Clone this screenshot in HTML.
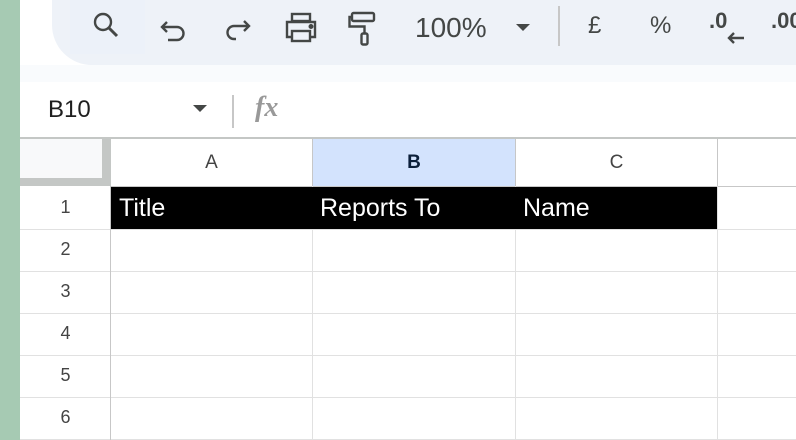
<!DOCTYPE html>
<html><head><style>
*{margin:0;padding:0;box-sizing:border-box}
body{width:796px;height:440px;overflow:hidden;background:#fff;font-family:"Liberation Sans",Arial,sans-serif;position:relative}
.a{position:absolute}
.ic{position:absolute;stroke:#444746;fill:none;stroke-width:2.4}
.rn{position:absolute;left:20px;width:91px;text-align:center;font-size:18px;color:#444;}
.hl{position:absolute;height:1px;background:#e1e1e1;left:20px;width:776px}
.vl{position:absolute;width:1px;background:#e1e1e1;top:186px;height:254px}
</style></head><body>
<div class="a" style="left:0;top:0;width:20px;height:440px;background:#a6cab3"></div>
<div class="a" style="left:20px;top:65px;width:776px;height:17px;background:#f9fbfd"></div>
<div class="a" style="left:52px;top:-20px;width:800px;height:85px;background:#eef2f8;border-radius:0 0 0 40px"></div>
<div class="a" style="left:70px;top:0;width:75px;height:54px;background:#ecf1f9"></div>
<!-- icons -->
<svg class="ic" style="left:88px;top:8px" width="36" height="36" viewBox="0 0 36 36"><circle cx="15" cy="14" r="8"/><path d="M21 20l8 8" stroke-width="3"/></svg>
<svg class="ic" style="left:158px;top:12px" width="34" height="34" viewBox="0 0 34 34"><path d="M9 10l-5 5 5 5"/><path d="M4 15h15a6.5 6.5 0 0 1 0 13h-9"/></svg>
<svg class="ic" style="left:220px;top:12px" width="34" height="34" viewBox="0 0 34 34"><path d="M24 9l5 5-5 5"/><path d="M29 14H14a6.5 6.5 0 0 0 0 13h2"/></svg>
<svg class="ic" style="left:282px;top:11px" width="40" height="34" viewBox="0 0 40 34"><rect x="10" y="3" width="18" height="7"/><path d="M10 26H5V11h28v15h-5"/><rect x="10" y="20" width="18" height="10"/><circle cx="29" cy="15.5" r="1.3" fill="#444746"/></svg>
<svg class="ic" style="left:347px;top:9px" width="32" height="38" viewBox="0 0 32 38"><rect x="5" y="4" width="22" height="8" rx="1.5"/><path d="M5 8H2.5v9.5h15v7"/><rect x="14.5" y="24.5" width="6" height="11" rx="1.5"/></svg>
<div class="a" style="left:415px;top:12px;font-size:28px;color:#444746">100%</div>
<svg class="a" style="left:513px;top:22px" width="20" height="12"><path d="M3 2h14l-7 7z" fill="#444746"/></svg>
<div class="a" style="left:558px;top:6px;width:2px;height:40px;background:#c7c7c7"></div>
<div class="a" style="left:588px;top:12px;font-size:24px;color:#444746">£</div>
<div class="a" style="left:650px;top:12px;font-size:24px;color:#444746">%</div>
<div class="a" style="left:709px;top:8px;font-size:22px;color:#444746;font-weight:bold">.0</div>
<svg class="ic" style="left:724px;top:31px" width="22" height="14"><path d="M20 7H5M10 2L5 7l5 5"/></svg>
<div class="a" style="left:771px;top:8px;font-size:22px;color:#444746;font-weight:bold">.00</div>
<!-- formula bar -->
<div class="a" style="left:48px;top:96px;font-size:24px;color:#1f1f1f">B10</div>
<svg class="a" style="left:190px;top:103px" width="20" height="10"><path d="M3 2h14l-7 7z" fill="#444746"/></svg>
<div class="a" style="left:232px;top:95px;width:2px;height:33px;background:#c7c7c7"></div>
<div class="a" style="left:255px;top:92px;font-size:28px;color:#999;font-style:italic;font-weight:bold;font-family:'Liberation Serif',serif">fx</div>
<div class="a" style="left:20px;top:137px;width:776px;height:2px;background:#c4c7c5"></div>
<!-- corner -->
<div class="a" style="left:20px;top:139px;width:82px;height:39px;background:#f8f9fa"></div>
<div class="a" style="left:102px;top:139px;width:9px;height:47px;background:#c4c7c5"></div>
<div class="a" style="left:20px;top:178px;width:91px;height:8px;background:#c4c7c5"></div>
<!-- column headers -->
<div class="a" style="left:313px;top:139px;width:202px;height:47px;background:#d3e3fd"></div>
<div class="a" style="left:312px;top:139px;width:1px;height:47px;background:#c7c7c7"></div>
<div class="a" style="left:515px;top:139px;width:1px;height:47px;background:#c7c7c7"></div>
<div class="a" style="left:717px;top:139px;width:1px;height:47px;background:#c7c7c7"></div>
<div class="a" style="left:111px;top:186px;width:685px;height:1px;background:#c7c7c7"></div>
<div class="a" style="left:111px;top:152px;width:201px;text-align:center;font-size:19px;color:#444">A</div>
<div class="a" style="left:313px;top:152px;width:202px;text-align:center;font-size:19px;color:#0b1f3a;font-weight:bold">B</div>
<div class="a" style="left:516px;top:152px;width:201px;text-align:center;font-size:19px;color:#444">C</div>
<!-- grid -->
<div class="hl" style="top:229px"></div><div class="hl" style="top:271px"></div><div class="hl" style="top:313px"></div><div class="hl" style="top:355px"></div><div class="hl" style="top:397px"></div><div class="hl" style="top:439px"></div>
<div class="vl" style="left:110px;background:#c7c7c7"></div><div class="vl" style="left:312px"></div><div class="vl" style="left:515px"></div><div class="vl" style="left:717px"></div>
<div class="a" style="left:111px;top:187px;width:606px;height:42px;background:#000"></div>
<div class="a" style="left:119px;top:194px;font-size:25px;color:#fff">Title</div>
<div class="a" style="left:320px;top:194px;font-size:25px;color:#fff">Reports To</div>
<div class="a" style="left:523px;top:194px;font-size:25px;color:#fff">Name</div>
<div class="rn" style="top:197px">1</div><div class="rn" style="top:239px">2</div><div class="rn" style="top:281px">3</div><div class="rn" style="top:323px">4</div><div class="rn" style="top:365px">5</div><div class="rn" style="top:407px">6</div>
</body></html>
